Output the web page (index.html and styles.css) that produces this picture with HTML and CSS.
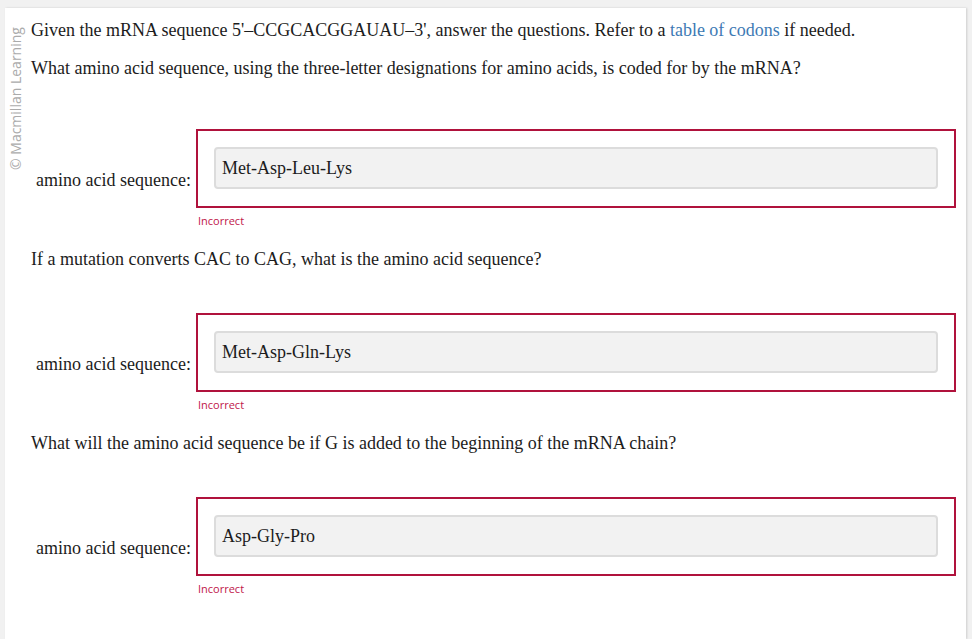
FILE: index.html
```html
<!DOCTYPE html>
<html lang="en">
<head>
    <meta charset="UTF-8">
    <meta name="viewport" content="width=device-width, initial-scale=1.0">
    <title>Genetic Code Question</title>
    <link rel="stylesheet" href="styles.css">
</head>
<body>

    <div class="card">
        <div class="watermark">© Macmillan Learning</div>

        <p class="intro">Given the mRNA sequence 5'–CCGCACGGAUAU–3', answer the questions. Refer to a <a href="#">table of codons</a> if needed.</p>

        <p class="question first">What amino acid sequence, using the three-letter designations for amino acids, is coded for by the mRNA?</p>
        <div class="answer-row">
            <label for="seq1">amino acid sequence:</label>
            <div class="answer-box">
                <input type="text" id="seq1" value="Met-Asp-Leu-Lys">
            </div>
        </div>
        <div class="feedback">Incorrect</div>

        <p class="question">If a mutation converts CAC to CAG, what is the amino acid sequence?</p>
        <div class="answer-row">
            <label for="seq2">amino acid sequence:</label>
            <div class="answer-box">
                <input type="text" id="seq2" value="Met-Asp-Gln-Lys">
            </div>
        </div>
        <div class="feedback">Incorrect</div>

        <p class="question">What will the amino acid sequence be if G is added to the beginning of the mRNA chain?</p>
        <div class="answer-row">
            <label for="seq3">amino acid sequence:</label>
            <div class="answer-box">
                <input type="text" id="seq3" value="Asp-Gly-Pro">
            </div>
        </div>
        <div class="feedback">Incorrect</div>
    </div>

</body>
</html>
```

FILE: styles.css
```css
body { margin: 0; background: #f1f1f1; font-family: "Liberation Serif", "Times New Roman", serif; font-size: 18px; color: #1c1c1c; }
.card {
    position: relative; box-sizing: border-box;
    margin: 8px 6px 0 5px; padding: 12px 10px 30px 26px;
    background: white; min-height: calc(100vh - 8px);
    box-shadow: 1px 0 2px rgba(0, 0, 0, 0.15);
}
.watermark {
    position: absolute; left: 3px; top: 162px;
    transform: rotate(-90deg); transform-origin: left top;
    font-family: "Open Sans", "Noto Sans", sans-serif; font-size: 14px; line-height: 16px;
    color: #ababab; white-space: nowrap;
}
p { margin: 0; line-height: 20px; }
a { color: #3d7ab4; text-decoration: none; }
.intro { margin-bottom: 18px; }
.question { margin-top: 21px; margin-bottom: 44px; }
.question.first { margin-top: 0; margin-bottom: 51px; }
.answer-row { display: flex; align-items: flex-end; }
.answer-row label { width: 160px; padding-left: 5px; padding-bottom: 18px; line-height: 20px; }
.answer-box {
    flex: 1; padding: 16px 16px 17px;
    border: 2px solid #b0123c;
}
.answer-box input {
    display: block; width: 100%; height: 42px; box-sizing: border-box;
    padding: 0 6px; border: 2px solid #dcdcdc; border-radius: 4px;
    background: #f2f2f2; color: #1c1c1c;
    font-family: "Liberation Serif", "Times New Roman", serif; font-size: 18px;
}
.feedback {
    margin: 5px 0 0 167px;
    font-family: "Open Sans", "Noto Sans", sans-serif; font-size: 11px; line-height: 15px;
    color: #c0164a;
}
```
